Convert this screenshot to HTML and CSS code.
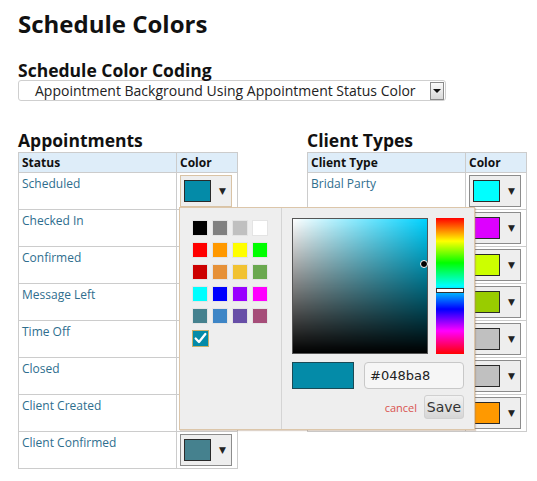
FILE: index.html
```html
<!DOCTYPE html>
<html>
<head>
<meta charset="utf-8">
<link rel="stylesheet" href="styles.css">
</head>
<body>
<div class="page">
  <h1 class="title">Schedule Colors</h1>
  <h2 class="subtitle">Schedule Color Coding</h2>
  <div class="select">
    <span class="select-text">Appointment Background Using Appointment Status Color</span>
    <span class="select-arrow"><span class="tri"></span></span>
  </div>

  <div class="sections">
    <div class="section">
      <h2 class="sec-title">Appointments</h2>
      <table class="grid">
        <colgroup><col class="c1"><col class="c2"></colgroup>
        <tr><th>Status</th><th>Color</th></tr>
        <tr><td><div class="name">Scheduled</div></td><td><div class="ccell"><div class="cwrap"><div class="cbtn open"><span class="sw" style="background:#048ba8"></span><span class="arr">&#9660;</span></div>
          <div class="popup">
            <div class="palette">
              <div class="prow"><span class="ps" style="background:#000000"></span><span class="ps" style="background:#808080"></span><span class="ps" style="background:#c0c0c0"></span><span class="ps" style="background:#ffffff"></span></div>
              <div class="prow"><span class="ps" style="background:#ff0000"></span><span class="ps" style="background:#ff9900"></span><span class="ps" style="background:#ffff00"></span><span class="ps" style="background:#00ff00"></span></div>
              <div class="prow"><span class="ps" style="background:#cc0000"></span><span class="ps" style="background:#e69138"></span><span class="ps" style="background:#f1c232"></span><span class="ps" style="background:#6aa84f"></span></div>
              <div class="prow"><span class="ps" style="background:#00ffff"></span><span class="ps" style="background:#0000ff"></span><span class="ps" style="background:#9900ff"></span><span class="ps" style="background:#ff00ff"></span></div>
              <div class="prow"><span class="ps" style="background:#45818e"></span><span class="ps" style="background:#3d85c6"></span><span class="ps" style="background:#674ea7"></span><span class="ps" style="background:#a64d79"></span></div>
              <div class="prow"><span class="ps sel"><svg viewBox="0 0 17 17" width="15" height="15"><path d="M3 8.5 L6.8 12.5 L14 3.5" fill="none" stroke="#ffffff" stroke-width="2.6" stroke-linecap="round" stroke-linejoin="round"/></svg></span></div>
            </div>
            <div class="picker">
              <div class="pick-top">
                <div class="sv"><span class="sv-dot"></span></div>
                <div class="hue"><span class="hue-mark"></span></div>
              </div>
              <div class="pick-mid">
                <div class="cur"></div>
                <div class="hex">#048ba8</div>
              </div>
              <div class="pick-bot">
                <span class="cancel">cancel</span>
                <span class="save">Save</span>
              </div>
            </div>
          </div>
        </div></div></td></tr>
        <tr><td><div class="name">Checked In</div></td><td><div class="ccell"><div class="cbtn"><span class="sw" style="background:#3a9ad0"></span><span class="arr">&#9660;</span></div></div></td></tr>
        <tr><td><div class="name">Confirmed</div></td><td><div class="ccell"><div class="cbtn"><span class="sw" style="background:#6aa84f"></span><span class="arr">&#9660;</span></div></div></td></tr>
        <tr><td><div class="name">Message Left</div></td><td><div class="ccell"><div class="cbtn"><span class="sw" style="background:#f1c232"></span><span class="arr">&#9660;</span></div></div></td></tr>
        <tr><td><div class="name">Time Off</div></td><td><div class="ccell"><div class="cbtn"><span class="sw" style="background:#c0c0c0"></span><span class="arr">&#9660;</span></div></div></td></tr>
        <tr><td><div class="name">Closed</div></td><td><div class="ccell"><div class="cbtn"><span class="sw" style="background:#808080"></span><span class="arr">&#9660;</span></div></div></td></tr>
        <tr><td><div class="name">Client Created</div></td><td><div class="ccell"><div class="cbtn"><span class="sw" style="background:#674ea7"></span><span class="arr">&#9660;</span></div></div></td></tr>
        <tr><td><div class="name">Client Confirmed</div></td><td><div class="ccell"><div class="cbtn"><span class="sw" style="background:#45818e"></span><span class="arr">&#9660;</span></div></div></td></tr>
      </table>
    </div>

    <div class="section">
      <h2 class="sec-title">Client Types</h2>
      <table class="grid">
        <colgroup><col class="c1"><col class="c2"></colgroup>
        <tr><th>Client Type</th><th>Color</th></tr>
        <tr><td><div class="name">Bridal Party</div></td><td><div class="ccell"><div class="cbtn"><span class="sw" style="background:#00ffff"></span><span class="arr">&#9660;</span></div></div></td></tr>
        <tr><td><div class="name">Wedding</div></td><td><div class="ccell"><div class="cbtn"><span class="sw" style="background:#dd00ff"></span><span class="arr">&#9660;</span></div></div></td></tr>
        <tr><td><div class="name">New Client</div></td><td><div class="ccell"><div class="cbtn"><span class="sw" style="background:#ccff00"></span><span class="arr">&#9660;</span></div></div></td></tr>
        <tr><td><div class="name">Regular</div></td><td><div class="ccell"><div class="cbtn"><span class="sw" style="background:#99cc00"></span><span class="arr">&#9660;</span></div></div></td></tr>
        <tr><td><div class="name">Walk In</div></td><td><div class="ccell"><div class="cbtn"><span class="sw" style="background:#c0c0c0"></span><span class="arr">&#9660;</span></div></div></td></tr>
        <tr><td><div class="name">Staff</div></td><td><div class="ccell"><div class="cbtn"><span class="sw" style="background:#c0c0c0"></span><span class="arr">&#9660;</span></div></div></td></tr>
        <tr><td><div class="name">VIP</div></td><td><div class="ccell"><div class="cbtn"><span class="sw" style="background:#ff9900"></span><span class="arr">&#9660;</span></div></div></td></tr>
      </table>
    </div>
  </div>
</div>
</body>
</html>
```

FILE: styles.css
```css
* { box-sizing: border-box; }
html, body { margin: 0; padding: 0; background: #ffffff; }
body { font-family: "Open Sans", "DejaVu Sans", sans-serif; color: #111; }

.page { padding-left: 18px; }

.title {
  margin: 10px 0 0;
  font-size: 24px;
  line-height: 28px;
  font-weight: 700;
  color: #111;
}
.subtitle {
  margin: 22px 0 0;
  font-size: 17.5px;
  line-height: 20px;
  font-weight: 700;
  color: #111;
}

.select {
  width: 428px;
  height: 21px;
  border: 1px solid #cfcfcf;
  border-radius: 3px;
  background: #fff;
  display: flex;
  align-items: center;
  justify-content: space-between;
  padding: 0 1px 0 16px;
}
.select-text { font-size: 14px; line-height: 19px; color: #222; }
.select-arrow {
  width: 14px;
  height: 18px;
  border: 1px solid #8a8a8a;
  background: linear-gradient(#fafafa, #d8d8d8);
  display: flex;
  align-items: center;
  justify-content: center;
}
.tri {
  width: 0; height: 0;
  border-left: 4px solid transparent;
  border-right: 4px solid transparent;
  border-top: 4px solid #111;
}

.sections { display: flex; gap: 70px; margin-top: 29px; }
.section { width: 219px; }
.sec-title {
  margin: 0 0 2px;
  font-size: 17.5px;
  line-height: 20px;
  font-weight: 700;
}

.grid {
  border-collapse: collapse;
  table-layout: fixed;
  width: 219px;
}
.grid col.c1 { width: 158px; }
.grid col.c2 { width: 61px; }
.grid th, .grid td { border: 1px solid #cccccc; padding: 0; vertical-align: top; }
.grid th {
  background: #deedf9;
  text-align: left;
  font-size: 12px;
  font-weight: 700;
  height: 20px;
  line-height: 19px;
  padding: 0 3px;
  color: #111;
}
.name {
  height: 36px;
  padding: 3px 3px;
  font-size: 12px;
  line-height: 16px;
  color: #2e6e8e;
}
.ccell { height: 36px; padding: 2px 0 0 3px; }
.cwrap { position: relative; }
.cbtn {
  width: 52px;
  height: 32px;
  border: 1px solid #8c8c8c;
  background: #eeeeee;
  display: flex;
  align-items: center;
  padding-left: 3px;
}
.cbtn.open { border-color: #d9c3a5; }
.sw {
  width: 27px;
  height: 22px;
  border: 1px solid #2a2a2a;
}
.arr {
  font-family: "DejaVu Sans", sans-serif;
  font-size: 9px;
  margin-left: 8px;
  color: #222;
}

.popup {
  position: absolute;
  top: 100%;
  left: -1px;
  width: 296px;
  height: 223px;
  background: #eeeeee;
  border: 1px solid #dcc6aa;
  box-shadow: 1px 1px 1px rgba(160, 130, 100, 0.35);
  display: flex;
  z-index: 5;
}
.palette {
  width: 102px;
  border-right: 1px solid #d4d4d4;
  padding: 12px 0 0 12px;
}
.prow { display: flex; gap: 4px; margin-bottom: 6px; height: 16px; }
.ps {
  width: 16px;
  height: 16px;
  border: 1px solid #e4e4e4;
  display: block;
}
.ps.sel {
  width: 17px;
  height: 17px;
  background: #048ba8;
  border: 1px solid #c9b06a;
  display: flex;
  align-items: center;
  justify-content: center;
}
.picker { flex: 1; padding: 10px 10px 0; }
.pick-top { display: flex; gap: 8px; }
.sv {
  position: relative;
  width: 136px;
  height: 136px;
  border: 1px solid #555;
  background:
    linear-gradient(to top, #000000, rgba(0,0,0,0)),
    linear-gradient(to right, #ffffff, #00d2ff);
}
.sv-dot {
  position: absolute;
  left: 127px;
  top: 41px;
  width: 8px;
  height: 8px;
  border-radius: 50%;
  background: #000;
  border: 1.5px solid #fff;
}
.hue {
  position: relative;
  width: 28px;
  height: 136px;
  background: linear-gradient(to bottom, #ff0000 0%, #ffff00 17%, #00ff00 33%, #00ffff 50%, #0000ff 67%, #ff00ff 83%, #ff0000 100%);
}
.hue-mark {
  position: absolute;
  left: 0;
  top: 70px;
  width: 28px;
  height: 5px;
  background: #fff;
  border: 1px solid #333;
}
.pick-mid { display: flex; gap: 10px; margin-top: 8px; }
.cur {
  width: 62px;
  height: 27px;
  background: #048ba8;
  border: 1px solid #1a4a55;
}
.hex {
  width: 100px;
  height: 27px;
  border: 1px solid #c8c8c8;
  border-radius: 4px;
  background: #f6f6f6;
  font-family: "DejaVu Sans", sans-serif;
  font-size: 13px;
  line-height: 25px;
  padding-left: 5px;
  color: #222;
}
.pick-bot {
  display: flex;
  justify-content: flex-end;
  align-items: center;
  gap: 7px;
  margin-top: 6px;
}
.cancel { font-size: 11px; color: #d9534f; }
.save {
  width: 40px;
  height: 24px;
  border: 1px solid #d0d0d0;
  border-radius: 3px;
  background: linear-gradient(#f2f2f2, #d6d6d6);
  font-family: "DejaVu Sans", sans-serif;
  font-size: 14px;
  line-height: 22px;
  text-align: center;
  color: #333;
}
```
